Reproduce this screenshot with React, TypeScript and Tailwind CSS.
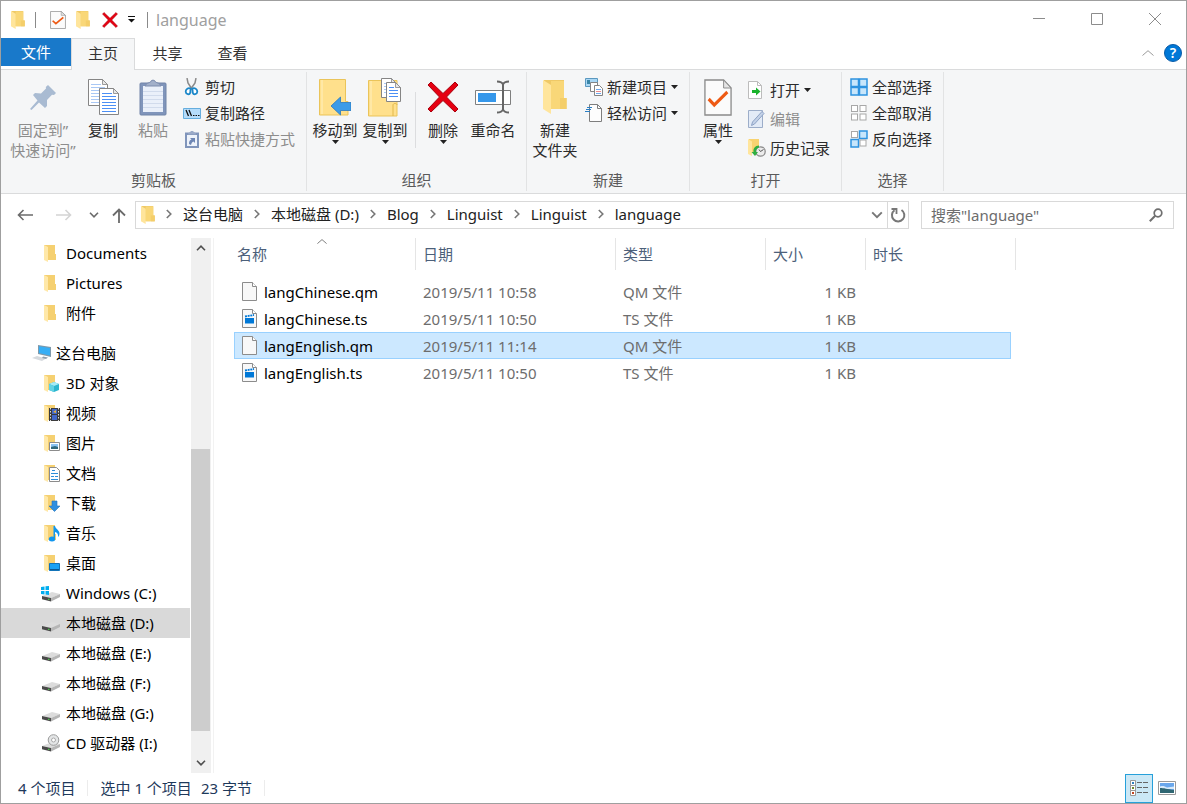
import type { ReactNode } from 'react'
import { clsx } from 'clsx'

type IconProps = { className?: string }

function FolderIcon({ className = 'w-3.5 h-[18px]' }: IconProps) {
  return (
    <svg viewBox="0 0 24 34" preserveAspectRatio="none" className={className} aria-hidden="true">
      <path d="M1 0h20v18h2.500v11H1z" fill="#efc967" />
      <path d="M8 1h13v17h2.500v11H8z" fill="#f9d778" />
      <path d="M17 18h6.500v11H17z" fill="#efc55c" opacity=".5" />
      <path d="M0 0l8 5v29l-8-5z" fill="#ffe59c" />
    </svg>
  )
}

function CheckDocIcon({ className = 'w-4 h-[18px]' }: IconProps) {
  return (
    <svg viewBox="0 0 30 37" className={className} preserveAspectRatio="none" aria-hidden="true">
      <path d="M1 1h20l8 8v27H1z" fill="#fbfbfb" stroke="#8b8b8b" strokeWidth="1.4" />
      <path d="M21 1v8h8z" fill="#e4e4e4" stroke="#8b8b8b" />
      <path d="M5 20l6 6 14-13" fill="none" stroke="#ee5a14" strokeWidth="3.200" />
    </svg>
  )
}

function DeleteIcon({ className = 'w-4 h-4' }: IconProps) {
  return (
    <svg viewBox="0 0 32 32" className={className} aria-hidden="true">
      <path
        d="M4 1l12 11.500L28 1l3 3-11.500 12L31 28l-3 3-12-11.500L4 31l-3-3 11.500-12L1 4z"
        fill="#e60012"
        stroke="#a8000c"
      />
    </svg>
  )
}

function DownArrow() {
  return (
    <svg viewBox="0 0 7 4" className="w-[7px] h-1 shrink-0" aria-hidden="true">
      <path d="M0 0h7L3.500 4z" fill="#222" />
    </svg>
  )
}

function Chevron({ className }: IconProps) {
  return (
    <svg viewBox="0 0 10 6" className={className} aria-hidden="true">
      <path d="M1 .8l4 4 4-4" fill="none" stroke="currentColor" strokeWidth="1.600" />
    </svg>
  )
}

// hairline version, used for the sort mark and the ribbon toggle
function ThinChevron({ className }: IconProps) {
  return (
    <svg viewBox="0 0 12 6" className={className} aria-hidden="true">
      <path d="M.5 5.500L6 .7l5.500 4.800" fill="none" stroke="currentColor" />
    </svg>
  )
}

function PinIcon() {
  return (
    <svg viewBox="0 0 27 27" className="w-[27px] h-[27px]" aria-hidden="true">
      <path
        d="M18 1l8 8-2 2-2-.3-5 5.300v6l-2 2-6-5.500L1.500 26 0 25l7.500-8.500L3 11l2-2 6 .5 5-5-.2-1.500z"
        fill="#a9bbd2"
      />
    </svg>
  )
}

function Page({ x, y, line, w = 20, h = 27 }: { x: number; y: number; line: string; w?: number; h?: number }) {
  const rows = [8, 11, 14, 17, 20, 23].filter((r) => r < h - 3)
  return (
    <g transform={`translate(${x} ${y})`}>
      <path d={`M.5.5h${w - 6}l5 5v${h - 6}H.5z`} fill="#fff" stroke="#858585" />
      <path d={`M${w - 5.5}.5v5h5z`} fill="#e8e8e8" stroke="#858585" strokeWidth=".8" />
      <path d={`M3 5.500h${w - 10}`} stroke={line} />
      {rows.map((r) => (
        <path key={r} d={`M3 ${r + 0.5}h${w - 6}`} stroke={line} />
      ))}
    </g>
  )
}

function CopyIcon() {
  return (
    <svg viewBox="0 0 31 37" className="w-[31px] h-[37px]" aria-hidden="true">
      <Page x={0} y={0} line="#a9c8f5" />
      <Page x={11} y={9} line="#4b8ff5" />
    </svg>
  )
}

function PasteIcon() {
  return (
    <svg viewBox="0 0 28 38" className="w-7 h-[38px]" aria-hidden="true">
      <rect x="1" y="5" width="26" height="32" rx="1" fill="#8095bb" stroke="#7184a8" />
      <path d="M4 8h20v26H4z" fill="#eaf0fa" />
      <path d="M4 13.500h20M4 17.500h20M4 21.500h20M4 25.500h20M4 29.500h20" stroke="#d1dbec" />
      <path d="M6 8c1-3 4-3 5.500-4a2.600 2.600 0 0 1 5 0C18 5 21 5 22 8z" fill="#a2b0ca" stroke="#7c8cae" />
    </svg>
  )
}

function MoveToIcon() {
  return (
    <svg viewBox="0 0 32 37" className="w-8 h-[37px]" aria-hidden="true">
      <path d="M.5.5h26v22h2.500v13.500H.5z" fill="#ffe08c" stroke="#eac45a" />
      <path d="M3 1v34" stroke="#fff0bf" />
      <path d="M12 27l9.500-9v5.500H32v8H21.500V36z" fill="#3b9be8" stroke="#2a78be" strokeWidth=".8" />
    </svg>
  )
}

function CopyToIcon() {
  return (
    <svg viewBox="0 0 34 39" className="w-[34px] h-[39px]" aria-hidden="true">
      <path d="M.5 2.500h28.500v35.500H.5z" fill="#ffe08c" stroke="#eac45a" />
      <path d="M3 3v34" stroke="#fff0bf" />
      <path d="M25 38V27c0-2 4-2 4 0" stroke="#e2b84a" fill="none" />
      <Page x={13} y={0} w={16} h={20} line="#a9c8f5" />
      <Page x={18} y={4} w={15} h={20} line="#4b8ff5" />
    </svg>
  )
}

function RenameIcon() {
  return (
    <svg viewBox="0 0 37 34" className="w-[37px] h-[34px]" aria-hidden="true">
      <path d="M.5 10.500h35v14H.5z" fill="#fff" stroke="#7f7f7f" />
      <path d="M3 13h18v9H3z" fill="#3597ea" />
      <path d="M22 1.500c3 0 5 .5 6 3 1-2.500 3-3 6-3M28 4v26M22 32.500c3 0 5-.5 6-3 1 2.500 3 3 6 3" fill="none" stroke="#666" strokeWidth="2" />
    </svg>
  )
}

function SmallIcon({ children }: { children: ReactNode }) {
  return (
    <svg viewBox="0 0 18 18" className="w-[18px] h-[18px] shrink-0" aria-hidden="true">
      {children}
    </svg>
  )
}

const cutIcon = (
  <SmallIcon>
    <path d="M4 0l1 5 4.500 7M13 0l-1 5-5 7" fill="none" stroke="#8a8a8a" strokeWidth="1.500" />
    <path d="M7.500 10.500c-2-1-5 .5-4.800 3.300.2 2.700 3.700 3.500 4.600.8zM9.500 10.500c2-1 5 .5 4.800 3.300-.2 2.700-3.700 3.500-4.600.8z" fill="#fff" stroke="#1b87c9" strokeWidth="1.800" />
  </SmallIcon>
)

const pathIcon = (
  <SmallIcon>
    <path d="M.5 4.500h17v10H.5z" fill="#b5dcfa" stroke="#66aede" />
    <path d="M3 6l2.500 6M6 6l2.500 6" stroke="#111" strokeWidth="1.300" />
    <path d="M10 11.500h1.500M12.500 11.500H14M15 11.500h1.500" stroke="#111" />
  </SmallIcon>
)

const shortcutIcon = (
  <SmallIcon>
    <path d="M2 2.500h14V18H2z" fill="#8095bb" />
    <path d="M4 5h10v11H4z" fill="#eef3fb" />
    <path d="M5 4.500c0-2 2-2 3-3.500h2c1 1.500 3 1.500 3 3.500z" fill="#9aaac8" />
    <path d="M6 14c0-3 1-4 2.500-4.500L7 8h5v5l-1.500-1.500C9 12 8.500 13 8 15z" fill="#6d86b4" />
  </SmallIcon>
)

const newItemIcon = (
  <SmallIcon>
    <path d="M.5.5h12v8H.5z" fill="#a9d7f5" stroke="#5b98bf" />
    <path d="M2 2h3v4H2z" fill="#3a86a8" />
    <path d="M5.500 4.500h7v9h-7z" fill="#fff" stroke="#858585" />
    <path d="M9.500 7.500h5l3 3v7h-8z" fill="#fff" stroke="#858585" />
    <path d="M11 11.500h5M11 15.500h5" stroke="#6ea8ec" />
    <path d="M11 13.500h5" stroke="#ec8b8b" />
  </SmallIcon>
)

const easyAccessIcon = (
  <SmallIcon>
    <path d="M4.500.5h8l4 4v13h-12z" fill="#fdfdfd" stroke="#7e7e7e" />
    <path d="M12.500.5v4h4" fill="none" stroke="#7e7e7e" />
    <path d="M2 3.500h5M1 5.500h5M0 7.500h5" stroke="#2b7fc5" />
  </SmallIcon>
)

const openIcon = (
  <SmallIcon>
    <path d="M.5.5h9l4 4v13H.5z" fill="#fff" stroke="#bcbcbc" />
    <path d="M9.500.5v4h4" fill="none" stroke="#bcbcbc" />
    <path d="M4 9h4V6.500l4.500 4L8 14.500V12H4z" fill="#19b32c" />
  </SmallIcon>
)

const editIcon = (
  <SmallIcon>
    <path d="M.5.5h14v17H.5z" fill="#e3ebf7" stroke="#9cadc9" />
    <path d="M3.500 15.500l1-3.500L14 1.500l2 2L6.500 14z" fill="#c3d1e7" stroke="#8ea3c6" />
  </SmallIcon>
)

const historyIcon = (
  <SmallIcon>
    <path d="M1 0h10v13H1z" fill="#f8d370" />
    <path d="M0 0l4 2.500V17l-4-2z" fill="#ffe59c" />
    <circle cx="12.500" cy="12.500" r="4.700" fill="#ececec" stroke="#8b8b8b" strokeWidth="1.300" />
    <path d="M12.500 12.500l3-2M12.500 12.500l-1.500-2" stroke="#555" />
    <path d="M11 6.500c-4 0-6 3-5.500 6.500H3.500L7 17l3-4H8c-.3-2 .8-4 3-4.500z" fill="#2fae41" />
  </SmallIcon>
)

function SquaresIcon({ on }: { on: boolean[] }) {
  const spots = [
    [1, 1],
    [9.5, 1],
    [1, 9.5],
    [9.5, 9.5],
  ]
  return (
    <SmallIcon>
      {spots.map(([x, y], i) =>
        on[i] ? (
          <rect key={i} x={x} y={y} width="7.500" height="7.500" fill="#c8e6fb" stroke="#2e93e0" strokeWidth="1.500" />
        ) : (
          <rect key={i} x={x + 0.5} y={y + 0.5} width="6" height="6" fill="#fff" stroke="#a8a8a8" />
        ),
      )}
    </SmallIcon>
  )
}

type BigProps = { icon: ReactNode; lines: string[]; arrow?: boolean; disabled?: boolean; wide?: boolean }

function BigButton({ icon, lines, arrow, disabled, wide }: BigProps) {
  return (
    <button
      type="button"
      disabled={disabled}
      className={clsx(
        'flex flex-col items-center pt-[5px] leading-5 whitespace-nowrap disabled:text-[#8d8d8d]',
        wide ? 'w-[70px]' : 'w-[50px]',
      )}
    >
      <span className="mb-[3px] flex h-10 w-full items-center justify-center">{icon}</span>
      {lines.map((line) => (
        <span key={line}>{line}</span>
      ))}
      {arrow && <DownArrow />}
    </button>
  )
}

type SmallProps = { icon: ReactNode; label: string; arrow?: boolean; disabled?: boolean; tall?: boolean }

function SmallButton({ icon, label, arrow, disabled, tall }: SmallProps) {
  return (
    <button
      type="button"
      disabled={disabled}
      className={clsx(
        'flex items-center gap-1 leading-5 whitespace-nowrap disabled:text-[#8d8d8d]',
        tall ? 'h-[29px]' : 'h-[26px]',
      )}
    >
      {icon}
      <span>{label}</span>
      {arrow && <DownArrow />}
    </button>
  )
}

function Group({ label, className, children }: { label: string; className?: string; children: ReactNode }) {
  return (
    <section aria-label={label} className="my-0.5 flex flex-col border-r border-[#e2e3e4]">
      <div className={clsx('flex h-24 items-start', className)}>{children}</div>
      <div className="h-[23px] text-center leading-6 text-[#5a5a5a]">{label}</div>
    </section>
  )
}

function TitleBar() {
  return (
    <header className="flex h-[37px] items-center">
      <div className="flex items-center pl-2.5">
        <FolderIcon />
        <span className="mx-2.5 h-4 w-px bg-[#8a8a8a]" />
        <button type="button" aria-label="属性" className="ml-1 w-[26px]">
          <CheckDocIcon />
        </button>
        <button type="button" aria-label="新建文件夹" className="w-[26px]">
          <FolderIcon />
        </button>
        <button type="button" aria-label="删除" className="w-[26px]">
          <DeleteIcon />
        </button>
        <button type="button" aria-label="自定义快速访问工具栏">
          <svg viewBox="0 0 7 7" className="h-[7px] w-[7px]" aria-hidden="true">
            <path d="M0 .5h7" stroke="#111" />
            <path d="M0 3h7L3.500 6.500z" fill="#111" />
          </svg>
        </button>
        <span className="mr-2 ml-3 h-4 w-px bg-[#8a8a8a]" />
      </div>
      <h1 className="text-base text-[#a0a0a0]">language</h1>
      <div className="ml-auto flex h-full pr-0.5 pb-0.5 text-[#8c8c8c]">
        <button type="button" aria-label="最小化" className="flex w-[58px] items-center justify-center">
          <svg viewBox="0 0 12 12" className="h-3 w-3"><path d="M0 5.500h12" stroke="currentColor" /></svg>
        </button>
        <button type="button" aria-label="最大化" className="flex w-[58px] items-center justify-center">
          <svg viewBox="0 0 12 12" className="h-3 w-3"><path d="M.5.5h11v11H.5z" fill="none" stroke="currentColor" /></svg>
        </button>
        <button type="button" aria-label="关闭" className="flex w-[58px] items-center justify-center">
          <svg viewBox="0 0 12 12" className="h-3 w-3"><path d="M0 0l12 12M12 0L0 12" stroke="currentColor" /></svg>
        </button>
      </div>
    </header>
  )
}

function Tabs() {
  return (
    <nav className="flex h-8 border-b border-[#dadbdc] text-[#333]">
      <button type="button" className="h-7 w-[70px] bg-[#1979ca] text-white">文件</button>
      <button type="button" className="-mb-px h-8 w-16 border border-b-0 border-[#dadbdc] bg-[#f5f6f7] pb-1">主页</button>
      <button type="button" className="w-[65px] pb-0.5">共享</button>
      <button type="button" className="w-[65px] pb-0.5">查看</button>
      <div className="ml-auto flex items-center gap-2.5 pr-1 pb-0.5">
        <button type="button" aria-label="最小化功能区" className="text-[#9a9a9a]">
          <ThinChevron className="h-1.5 w-3" />
        </button>
        <button type="button" aria-label="帮助" className="h-[18px] w-[18px] rounded-full border border-[#0a5ca8] bg-[#0078d7] text-sm leading-4 font-semibold text-white">
          ?
        </button>
      </div>
    </nav>
  )
}

function Ribbon() {
  return (
    <div className="flex h-[124px] border-b border-[#dadbdc] bg-[#f5f6f7] text-[#2b2b2b]">
      <Group label="剪贴板" className="pr-[11px] pl-[7px]">
        <BigButton icon={<PinIcon />} lines={['固定到”', '快速访问”']} disabled wide />
        <BigButton icon={<CopyIcon />} lines={['复制']} />
        <BigButton icon={<PasteIcon />} lines={['粘贴']} disabled />
        <div className="flex flex-col pt-0.5 pl-[5px]">
          <SmallButton icon={cutIcon} label="剪切" />
          <SmallButton icon={pathIcon} label="复制路径" />
          <SmallButton icon={shortcutIcon} label="粘贴快捷方式" disabled />
        </div>
      </Group>
      <Group label="组织" className="pr-2 pl-[3px]">
        <BigButton icon={<MoveToIcon />} lines={['移动到']} arrow />
        <BigButton icon={<CopyToIcon />} lines={['复制到']} arrow />
        <span className="mt-5 mr-0.5 ml-[5px] h-14 w-px bg-[#dcdddf]" />
        <BigButton icon={<DeleteIcon className="h-8 w-8" />} lines={['删除']} arrow />
        <BigButton icon={<RenameIcon />} lines={['重命名']} />
      </Group>
      <Group label="新建" className="pr-[11px] pl-[3px]">
        <BigButton icon={<FolderIcon className="h-[34px] w-6" />} lines={['新建', '文件夹']} />
        <div className="flex flex-col pt-0.5 pl-[5px]">
          <SmallButton icon={newItemIcon} label="新建项目" arrow />
          <SmallButton icon={easyAccessIcon} label="轻松访问" arrow />
        </div>
      </Group>
      <Group label="打开" className="pr-[11px] pl-[3px]">
        <BigButton icon={<CheckDocIcon className="h-[37px] w-7" />} lines={['属性']} arrow />
        <div className="flex flex-col pt-[3px] pl-[5px]">
          <SmallButton icon={openIcon} label="打开" arrow tall />
          <SmallButton icon={editIcon} label="编辑" disabled tall />
          <SmallButton icon={historyIcon} label="历史记录" tall />
        </div>
      </Group>
      <Group label="选择" className="pr-[11px] pl-2">
        <div className="flex flex-col pt-0.5">
          <SmallButton icon={<SquaresIcon on={[true, true, true, true]} />} label="全部选择" />
          <SmallButton icon={<SquaresIcon on={[false, false, false, false]} />} label="全部取消" />
          <SmallButton icon={<SquaresIcon on={[false, true, true, false]} />} label="反向选择" />
        </div>
      </Group>
    </div>
  )
}

const CRUMBS = ['这台电脑', '本地磁盘 (D:)', 'Blog', 'Linguist', 'Linguist', 'language']

function AddressRow() {
  return (
    <div className="flex h-11 items-start pt-[7px] pr-3 text-[#222]">
      <div className="flex h-7 w-[134px] shrink-0 items-center pl-4 text-[#6b6b6b]">
        <button type="button" aria-label="后退" className="w-[39px]">
          <svg viewBox="0 0 16 12" className="h-3 w-4"><path d="M16 6H1.500M6.500 1l-5 5 5 5" fill="none" stroke="currentColor" strokeWidth="1.600" /></svg>
        </button>
        <button type="button" aria-label="前进" className="w-[33px] text-[#d4d4d4]">
          <svg viewBox="0 0 16 12" className="h-3 w-4"><path d="M0 6h14.500M9.500 1l5 5-5 5" fill="none" stroke="currentColor" strokeWidth="1.600" /></svg>
        </button>
        <button type="button" aria-label="最近浏览的位置" className="w-[23px]">
          <Chevron className="h-1.5 w-2.5" />
        </button>
        <button type="button" aria-label="上移">
          <svg viewBox="0 0 14 15" className="h-[15px] w-3.5"><path d="M7 15V1.500M1 7.500l6-6 6 6" fill="none" stroke="currentColor" strokeWidth="1.800" /></svg>
        </button>
      </div>
      <div className="flex h-7 flex-1 items-center border border-[#d9d9d9] pl-[5px]">
        <FolderIcon />
        {CRUMBS.map((crumb, i) => (
          <div key={i} className="flex items-center pb-0.5 whitespace-nowrap">
            <span className="flex w-7 justify-center text-[#777]">
              <Chevron className="h-1.5 w-2.5 -rotate-90" />
            </span>
            <button type="button">{crumb}</button>
          </div>
        ))}
        <button type="button" aria-label="以前的位置" className="ml-auto flex w-5 justify-center text-[#777]">
          <Chevron className="h-2 w-3" />
        </button>
        <button type="button" aria-label="刷新" className="flex h-full w-[21px] items-center justify-center border-l border-[#d9d9d9] text-[#777]">
          <svg viewBox="0 0 16 16" className="h-4 w-4">
            <path d="M4.500 3.200A6.200 6.200 0 1 0 11.500 3" fill="none" stroke="currentColor" strokeWidth="2" />
            <path d="M1.500 2h5v5" fill="none" stroke="currentColor" strokeWidth="1.800" />
          </svg>
        </button>
      </div>
      <form role="search" className="ml-3 flex h-7 w-[253px] items-center border border-[#d9d9d9] pr-2.5 pl-[9px]">
        <input
          type="text"
          aria-label="搜索"
          placeholder={'搜索"language"'}
          className="min-w-0 flex-1 outline-none placeholder:text-[#6d6d6d]"
        />
        <svg viewBox="0 0 14 14" className="h-3.5 w-3.5 text-[#6f6f6f]" aria-hidden="true">
          <circle cx="9" cy="5" r="3.800" fill="none" stroke="currentColor" strokeWidth="1.700" />
          <path d="M6.200 7.800L.8 13.200" stroke="currentColor" strokeWidth="2" />
        </svg>
      </form>
    </div>
  )
}

function TreeFolder({ children }: { children?: ReactNode }) {
  return (
    <svg viewBox="0 0 20 18" className="h-[18px] w-5 shrink-0" aria-hidden="true">
      <path d="M4 1h11v9h1v6H4z" fill="#f5d071" />
      <path d="M4 1l4 2v15l-4-2z" fill="#ffe8a8" />
      {children}
    </svg>
  )
}

function DriveIcon({ children }: { children?: ReactNode }) {
  return (
    <svg viewBox="0 0 20 18" className="h-[18px] w-5 shrink-0" aria-hidden="true">
      <path d="M2 12l10-4 8 2-9 4z" fill="#dcdcdc" />
      <path d="M2 12l9 2v3.500l-9-2.300z" fill="#4a4a4a" />
      <path d="M11 14l9-4v3l-9 4.500z" fill="#b5b5b5" />
      <path d="M8 15.300h1.500" stroke="#4be04b" />
      {children}
    </svg>
  )
}

const pcIcon = (
  <svg viewBox="0 0 20 18" className="h-[18px] w-5 shrink-0" aria-hidden="true">
    <path d="M6 1l13 2v10L6 10z" fill="#7e99ab" />
    <path d="M7 2.200l11 1.700v7.600L7 9z" fill="#36aef5" />
    <path d="M0 14l5-2 9 2.500-4 2.500z" fill="#d6dade" />
    <path d="M11 12.500l5 1-2 1.500-4-1z" fill="#8fa0ad" />
  </svg>
)

const TREE = [
  { label: 'Documents', icon: <TreeFolder /> },
  { label: 'Pictures', icon: <TreeFolder /> },
  { label: '附件', icon: <TreeFolder /> },
  { label: '这台电脑', icon: pcIcon, root: true },
  {
    label: '3D 对象',
    icon: (
      <TreeFolder>
        <path d="M9 10l5-2 5 2v6l-5 2-5-2z" fill="#2cb6cf" />
        <path d="M9 10l5-2 5 2-5 2z" fill="#a8ecf5" />
        <path d="M9 10l5 2v6l-5-2z" fill="#62d3e4" />
      </TreeFolder>
    ),
  },
  {
    label: '视频',
    icon: (
      <TreeFolder>
        <path d="M9 4h11v13H9z" fill="#3b3b3b" />
        <path d="M12 5h5v5h-5zM12 11h5v5h-5z" fill="#4267c9" />
        <path d="M13 8l3-2v3z" fill="#e6b23c" />
        <path d="M10.500 4v13M18.500 4v13" stroke="#ddd" strokeDasharray="1.500 1.500" />
      </TreeFolder>
    ),
  },
  {
    label: '图片',
    icon: (
      <TreeFolder>
        <path d="M9.500 8.500h10v8h-10z" fill="#fff" stroke="#8c8c8c" />
        <path d="M11 10h7v3h-7z" fill="#8cc3f2" />
        <path d="M11 13l4-1 3 1v2h-7z" fill="#32697c" />
      </TreeFolder>
    ),
  },
  {
    label: '文档',
    icon: (
      <TreeFolder>
        <path d="M9.500 3.500h7l3 3v11h-10z" fill="#fff" stroke="#8c8c8c" />
        <path d="M11 9.500h7M11 12.500h3M15 12.500h3M11 15.500h7M12 6.500h3" stroke="#2f8fd8" />
      </TreeFolder>
    ),
  },
  {
    label: '下载',
    icon: (
      <TreeFolder>
        <path d="M12 7h5v5h3l-5.500 5.500L9 12h3z" fill="#2f8fe0" stroke="#2574b8" strokeWidth=".6" />
      </TreeFolder>
    ),
  },
  {
    label: '音乐',
    icon: (
      <TreeFolder>
        <ellipse cx="12" cy="15" rx="3.200" ry="2.500" fill="#1196ee" />
        <path d="M13.500 15V2h1.500c.5 3 4.500 4 4.500 7.500 0 1.500-.5 2.500-1.500 3.500.5-3-1-4.500-3-5v7z" fill="#1196ee" />
      </TreeFolder>
    ),
  },
  {
    label: '桌面',
    icon: (
      <TreeFolder>
        <path d="M9.500 9.500h10v7h-10z" fill="#18a1f5" stroke="#1273b8" />
        <path d="M10 15.500h9" stroke="#0c5a94" />
      </TreeFolder>
    ),
  },
  {
    label: 'Windows (C:)',
    icon: (
      <DriveIcon>
        <path d="M1 3l3.500-.5V6H1zM5.500 2.300L9 2v4H5.500zM1 7h3.500v3.500L1 10zM5.500 7H9v4l-3.500-.4z" fill="#00adef" />
      </DriveIcon>
    ),
  },
  { label: '本地磁盘 (D:)', icon: <DriveIcon />, selected: true },
  { label: '本地磁盘 (E:)', icon: <DriveIcon /> },
  { label: '本地磁盘 (F:)', icon: <DriveIcon /> },
  { label: '本地磁盘 (G:)', icon: <DriveIcon /> },
  {
    label: 'CD 驱动器 (I:)',
    icon: (
      <DriveIcon>
        <circle cx="13.500" cy="6" r="5.300" fill="#e4e6e7" stroke="#9c9c9c" />
        <circle cx="13.500" cy="6" r="2" fill="#fff" stroke="#a9a9a9" />
      </DriveIcon>
    ),
  },
]

function Sidebar() {
  return (
    <aside className="flex w-[213px] shrink-0 border-r border-[#f2f2f2]">
      <ul className="w-[189px] text-black">
        {TREE.map((item) => (
          <li key={item.label} className={clsx(item.root && 'pt-2.5')}>
            <button
              type="button"
              className={clsx(
                'flex h-[30px] w-full items-center whitespace-nowrap',
                item.root ? 'gap-1 pl-[31px]' : 'gap-1.5 pl-[39px]',
                item.selected && 'bg-[#d9d9d9]',
              )}
            >
              {item.icon}
              {item.label}
            </button>
          </li>
        ))}
      </ul>
      <div className="ml-px flex w-5 flex-col bg-[#f0f0f0] text-[#505050]">
        <button type="button" aria-label="向上滚动" className="flex h-5 items-center justify-center">
          <Chevron className="h-1.5 w-2.5 rotate-180" />
        </button>
        <div className="grow-[191]" />
        <div className="w-[19px] grow-[282] bg-[#cdcdcd]" />
        <div className="grow-[22]" />
        <button type="button" aria-label="向下滚动" className="flex h-5 items-center justify-center">
          <Chevron className="h-1.5 w-2.5" />
        </button>
      </div>
    </aside>
  )
}

function FileIcon({ ts }: { ts: boolean }) {
  return (
    <svg viewBox="0 0 15 19" className="h-[19px] w-[15px] shrink-0" aria-hidden="true">
      <path d="M.5.5h10l4 4v14H.5z" fill="#f8f8f8" stroke="#8c8c8c" />
      <path d="M10.500.5v4h4" fill="#fff" stroke="#8c8c8c" />
      {ts && (
        <>
          <path d="M3 9h9v5.500H3z" fill="#0078d7" />
          <path d="M3 7.500l9-1.500" stroke="#0078d7" strokeWidth="1.800" strokeDasharray="2 .7" />
        </>
      )}
    </svg>
  )
}

const COLUMNS = [
  { label: '名称', col: 'w-[182px]', head: 'pl-[3px]' },
  { label: '日期', col: 'w-[200px]', head: 'pl-[7px]' },
  { label: '类型', col: 'w-[150px]', head: 'pl-[7px]' },
  { label: '大小', col: 'w-[100px]', head: 'pl-[7px]' },
  // the last divider sits a little outside the row highlight
  { label: '时长', col: 'w-[145px]', head: 'w-[150px] pl-[7px]' },
]

const FILES = [
  { name: 'langChinese.qm', date: '2019/5/11 10:58', type: 'QM 文件', size: '1 KB' },
  { name: 'langChinese.ts', date: '2019/5/11 10:50', type: 'TS 文件', size: '1 KB' },
  { name: 'langEnglish.qm', date: '2019/5/11 11:14', type: 'QM 文件', size: '1 KB', selected: true },
  { name: 'langEnglish.ts', date: '2019/5/11 10:50', type: 'TS 文件', size: '1 KB' },
]

function FileList() {
  return (
    <main className="min-w-0 flex-1 pl-5">
      <table className="w-[777px] table-fixed border-separate border-spacing-0 text-[#6d6d6d]">
        <thead>
          <tr>
            {COLUMNS.map((c, i) => (
              <th key={c.label} className={clsx('relative p-0 pb-2 text-left font-normal text-[#4c607a]', c.col)}>
                {i === 0 && <ThinChevron className="absolute top-px left-[83px] h-[5px] w-2.5 text-[#666]" />}
                <div className={clsx('flex h-8 items-center border-r border-[#e5e5e5]', c.head)}>{c.label}</div>
              </th>
            ))}
          </tr>
        </thead>
        <tbody>
          {FILES.map((f) => {
            const cell = clsx(
              'h-[27px] border-y p-0 leading-6',
              f.selected ? 'border-[#99d1ff] bg-[#cce8ff]' : 'border-transparent',
            )
            return (
              <tr key={f.name} aria-selected={f.selected}>
                <td className={clsx(cell, 'border-l pl-[7px] text-black')}>
                  <div className="flex items-center gap-[7px]">
                    <FileIcon ts={f.name.endsWith('.ts')} />
                    {f.name}
                  </div>
                </td>
                <td className={clsx(cell, 'pl-[7px]')}>{f.date}</td>
                <td className={clsx(cell, 'pl-[7px]')}>{f.type}</td>
                <td className={clsx(cell, 'pr-2.5 text-right')}>{f.size}</td>
                <td className={clsx(cell, 'border-r')} />
              </tr>
            )
          })}
        </tbody>
      </table>
    </main>
  )
}

function StatusBar() {
  return (
    <footer className="flex h-[30px] items-center pl-[17px] text-[#1e395b]">
      <span>4 个项目</span>
      <span className="mx-3 h-4 w-px bg-[#ececec]" />
      <span>选中 1 个项目</span>
      <span className="ml-[9px]">23 字节</span>
      <span className="mx-3 h-4 w-px bg-[#ececec]" />
      <div className="ml-auto flex h-full items-center pr-2.5">
        <button type="button" aria-label="详细信息" className="flex h-[29px] w-7 items-center justify-center border border-[#26a0da] bg-[#cbe8f6]">
          <svg viewBox="0 0 18 16" className="h-4 w-[18px]" aria-hidden="true">
            <path d="M.5.500h5v5h-5zM.5 5.500h5v5h-5zM.5 10.500h5v5h-5z" fill="#fff" stroke="#999" />
            <path d="M2 3h2" stroke="#2d7fc0" strokeWidth="2" />
            <path d="M2 8h2" stroke="#6f8a2c" strokeWidth="2" />
            <path d="M2 13h2" stroke="#c2441f" strokeWidth="2" />
            <path d="M7 2.500h5M13 2.500h5M7 7.500h5M13 7.500h5M7 12.500h5M13 12.500h5" stroke="#666" />
          </svg>
        </button>
        <button type="button" aria-label="大图标" className="ml-[5px]">
          <svg viewBox="0 0 18 14" className="h-3.5 w-[18px]" aria-hidden="true">
            <path d="M.5.5h17v13H.5z" fill="#fff" stroke="#999" />
            <path d="M2 2h14v10H2z" fill="#6aa7ec" />
            <path d="M2 5.500c3-1 5 0 7 1l7-1V8H2z" fill="#d7eafa" />
            <path d="M2 7c4 0 7 1 14 2v3H2z" fill="#2f6672" />
          </svg>
        </button>
      </div>
    </footer>
  )
}

function App() {
  return (
    <div className="flex min-h-screen flex-col border border-[#9f9f9f] bg-white font-['Noto_Sans','Noto_Sans_CJK_SC',sans-serif] text-[15px] leading-5">
      <TitleBar />
      <Tabs />
      <Ribbon />
      <AddressRow />
      <div className="flex flex-1">
        <Sidebar />
        <FileList />
      </div>
      <StatusBar />
    </div>
  )
}

export default App
